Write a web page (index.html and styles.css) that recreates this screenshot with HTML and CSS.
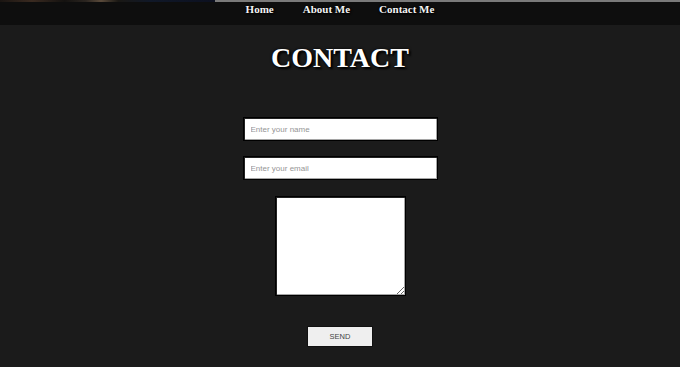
FILE: index.html
```html
<!DOCTYPE html>
<html>
<head>
<meta charset="utf-8">
<link rel="stylesheet" href="styles.css">
</head>
<body>
<div class="topstrip"><div class="banner"></div><div class="rule"></div></div>
<nav class="nav">
  <a href="#">Home</a>
  <a href="#">About Me</a>
  <a href="#">Contact Me</a>
</nav>
<main class="main">
  <h1 class="title">CONTACT</h1>
  <form class="form">
    <input class="field" type="text" placeholder="Enter your name">
    <input class="field email" type="email" placeholder="Enter your email">
    <textarea class="message"></textarea>
    <button class="send" type="button">SEND</button>
  </form>
</main>
</body>
</html>
```
FILE: styles.css
```css
* { box-sizing: border-box; }
html, body { margin: 0; padding: 0; }
body {
  background: #1b1b1b;
  font-family: "Liberation Serif", serif;
  height: 367px;
  overflow: hidden;
}
.topstrip { display: flex; height: 2px; }
.banner {
  width: 215px;
  background: linear-gradient(90deg, #1a1512 0%, #3a2a20 15%, #141210 30%, #2b2520 40%, #5a4a3a 47%, #1a1814 55%, #101828 70%, #0c1020 100%);
}
.rule { flex: 1; background: #7a7a7a; }
.nav {
  height: 23px;
  background: #0e0e0e;
  display: flex;
  justify-content: center;
  gap: 29px;
  padding-top: 0;
}
.nav a {
  color: #f4f4f4;
  text-decoration: none;
  font-weight: bold;
  font-size: 11px;
  line-height: 14px;
  text-shadow: 1px 1px 2px #000, 0 0 2px #000;
}
.main {
  display: flex;
  flex-direction: column;
  align-items: center;
}
.title {
  margin: 17px 0 0;
  color: #ffffff;
  font-size: 28px;
  line-height: 32px;
  font-weight: bold;
  text-shadow: 2px 2px 2px #000, 0 0 3px #000;
}
.form {
  margin-top: 43px;
  display: flex;
  flex-direction: column;
  align-items: center;
}
.field, .message {
  background: #fff;
  border: 1px solid #000;
  box-shadow: inset 1px 1px 0 #222, inset -1px -1px 0 #a5a5a5;
  outline: none;
}
.field {
  width: 195px;
  height: 24px;
  padding: 0 7px;
  font-family: "Liberation Sans", Arial, sans-serif;
  font-size: 8px;
}
.field::placeholder { color: #959595; }
.email { margin-top: 15px; }
.message {
  margin-top: 16px;
  width: 131px;
  height: 100px;
  resize: both;
}
.send {
  margin-top: 30px;
  width: 66px;
  height: 21px;
  background: #efefef;
  border: 1px solid #111;
  font-family: "Liberation Sans", Arial, sans-serif;
  font-size: 7.5px;
  color: #444;
  padding: 0;
}
```
